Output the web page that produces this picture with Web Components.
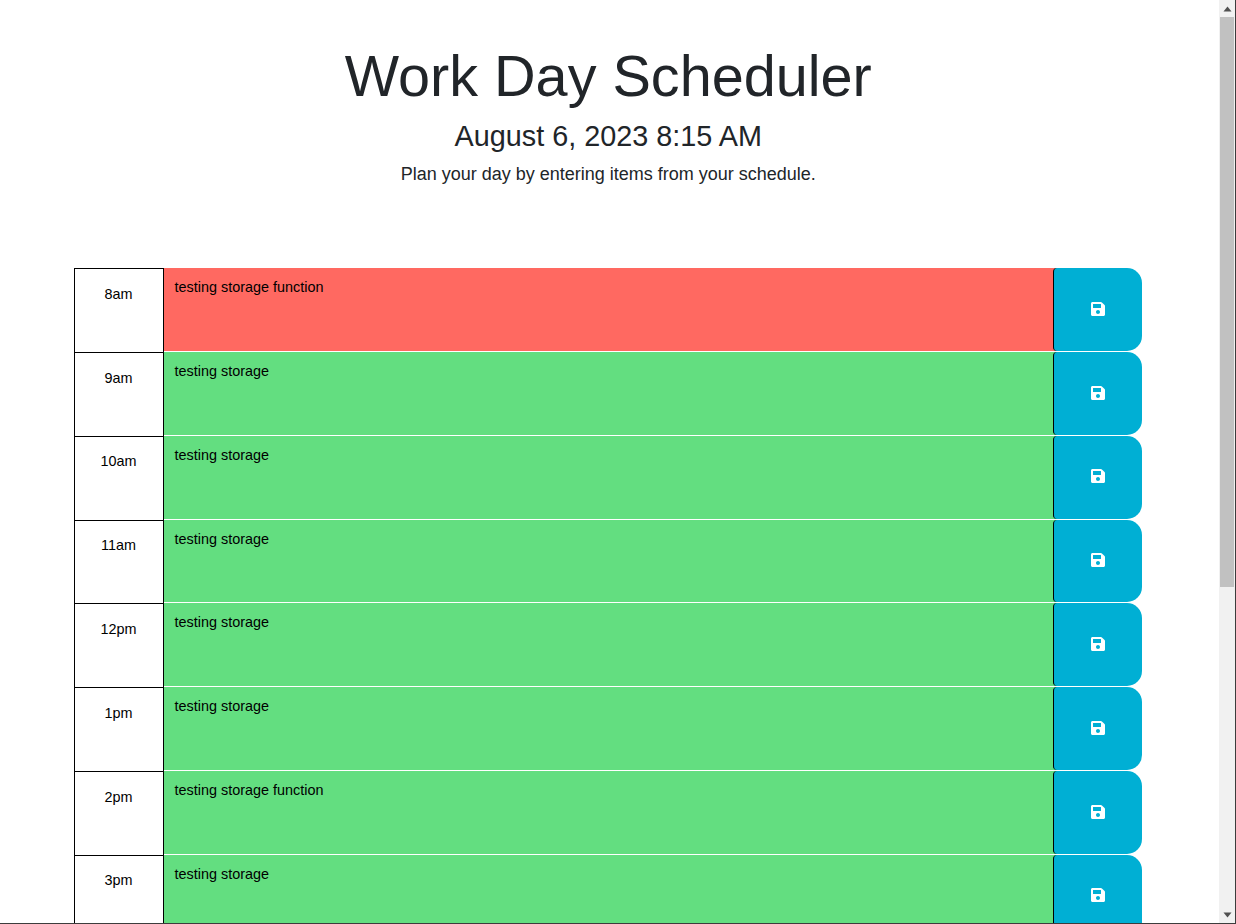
<!DOCTYPE html>
<html lang="en"><head><meta charset="utf-8"><title>Work Day Scheduler</title>
<style>
html,body{margin:0;height:924px;overflow:hidden;background:#fff}
body{font-family:"Liberation Sans",Arial,sans-serif;color:#212529;font-size:16px;line-height:1.5}
</style></head><body>
<scheduler-app>
  <day-header slot="head" date="August 6, 2023 8:15 AM"></day-header>
  <hour-row hour="8am" state="present" text="testing storage function"></hour-row>
  <hour-row hour="9am" state="future" text="testing storage"></hour-row>
  <hour-row hour="10am" state="future" text="testing storage"></hour-row>
  <hour-row hour="11am" state="future" text="testing storage"></hour-row>
  <hour-row hour="12pm" state="future" text="testing storage"></hour-row>
  <hour-row hour="1pm" state="future" text="testing storage"></hour-row>
  <hour-row hour="2pm" state="future" text="testing storage function"></hour-row>
  <hour-row hour="3pm" state="future" text="testing storage"></hour-row>
</scheduler-app>
<script>
class SchedulerApp extends HTMLElement{constructor(){super();this.attachShadow({mode:'open'}).innerHTML=`<style>
:host{display:flex;height:923px;border-bottom:1px solid #3c3c3c;overflow:hidden}
main{flex:1;min-width:0;height:924px;overflow:hidden}
.rows{width:1068px;margin:0 0 0 74px;display:flex;flex-direction:column}
scroll-bar{flex:none}
</style><main><slot name="head"></slot><div class="rows"><slot></slot></div></main><scroll-bar></scroll-bar>`}}
class DayHeader extends HTMLElement{constructor(){super();this.attachShadow({mode:'open'}).innerHTML=`<style>
:host{display:block;height:268.2px;box-sizing:border-box;padding-top:42px;text-align:center;margin-right:2.5px}
h1{margin:0;font-size:57.6px;font-weight:300;line-height:1.2;color:#212529}
.d{font-size:28.8px;line-height:1.5;margin-top:4px;color:#212529}
.l{font-size:18px;line-height:1.5;font-weight:300;margin-top:3px;color:#212529}
</style><h1>Work Day Scheduler</h1><div class="d"></div><div class="l">Plan your day by entering items from your schedule.</div>`;
this.shadowRoot.querySelector('.d').textContent=this.getAttribute('date')}}
class HourRow extends HTMLElement{constructor(){super();const c={present:'#ff6961',future:'#63de80'}[this.getAttribute('state')];
this.attachShadow({mode:'open'}).innerHTML=`<style>
:host{display:flex;height:83.8px;flex:none}
.t{box-sizing:border-box;width:90px;border:1px solid #000;border-bottom:none;font-size:14.4px;color:#000;text-align:center;padding:14.6px 1px 0 0;line-height:21.6px;background:#fff}
.n{flex:1;min-width:0;margin:0 -4px 1px -1px;background:${c};color:#000;font-size:14.4px;line-height:21.6px;padding:9px 11px 8px 10.6px;box-sizing:border-box;border-left:1px solid #000}
.b{width:89px;flex:none;position:relative;z-index:1;background:#00afd4;border:none;border-left:1px solid #000;box-sizing:border-box;border-radius:4px 15px 15px 4px;margin-bottom:1px;display:flex;align-items:center;justify-content:center;padding:0 0 1.6px 0}
.b svg{width:14px;height:16px;fill:#fff;display:block}
</style><div class="t"></div><div class="n"></div><button class="b" aria-label="Save"><svg viewBox="0 0 448 512"><path d="M433.9 129.9l-83.9-83.9A48 48 0 0 0 316.1 32H48C21.5 32 0 53.5 0 80v352c0 26.5 21.5 48 48 48h352c26.5 0 48-21.5 48-48V163.9a48 48 0 0 0-14.1-34zM224 416c-35.3 0-64-28.7-64-64 0-35.3 28.7-64 64-64s64 28.7 64 64c0 35.3-28.7 64-64 64zm96-304.5V212c0 6.6-5.4 12-12 12H76c-6.6 0-12-5.4-12-12V108c0-6.6 5.4-12 12-12h228.5c3.2 0 6.2 1.3 8.5 3.5l3.5 3.5c2.3 2.3 3.5 5.3 3.5 8.5z"/></svg></button>`;
this.shadowRoot.querySelector('.t').textContent=this.getAttribute('hour');this.shadowRoot.querySelector('.n').textContent=this.getAttribute('text')}}
class ScrollBar extends HTMLElement{constructor(){super();this.attachShadow({mode:'open'}).innerHTML=`<style>
:host{display:flex;flex-direction:column;width:16px;height:100%;box-sizing:content-box;background:#f1f1f1;border-right:1px solid #3c3c3c}
.a{height:17px;display:flex;align-items:center;justify-content:center}
.a svg{width:9px;height:6px;fill:#505050;display:block}
.tr{flex:1;padding:0 1px}
.th{height:570px;background:#c1c1c1}
</style><div class="a"><svg viewBox="0 0 9 6"><path d="M4.5 0.5L8.5 5.5H.5z"/></svg></div><div class="tr"><div class="th"></div></div><div class="a"><svg viewBox="0 0 9 6"><path d="M.5 .5H8.5L4.5 5.5z"/></svg></div>`}}
customElements.define('scheduler-app',SchedulerApp);
customElements.define('day-header',DayHeader);
customElements.define('hour-row',HourRow);
customElements.define('scroll-bar',ScrollBar);
</script></body></html>
